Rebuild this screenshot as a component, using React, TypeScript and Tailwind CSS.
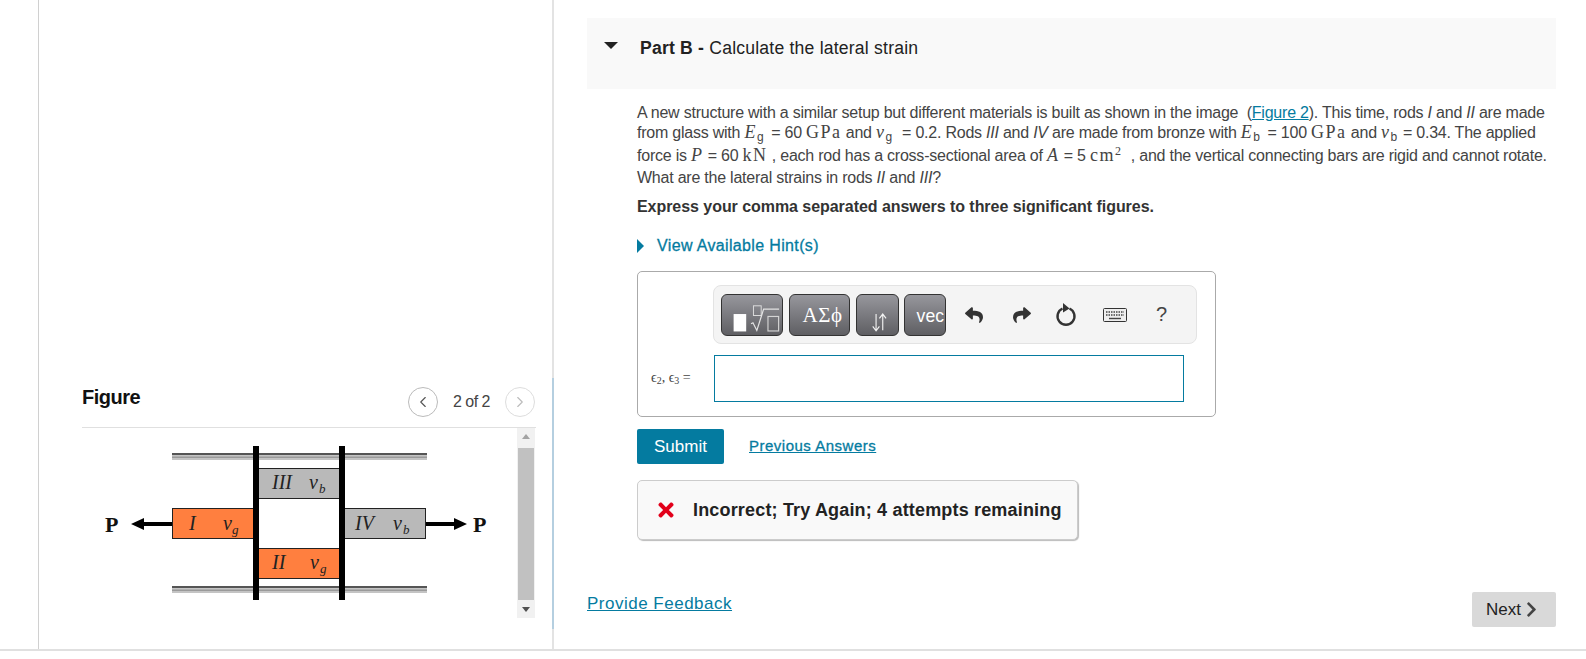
import { ChevronLeft, ChevronRight } from 'lucide-react';
import { FaReply, FaShare, FaTimes, FaChevronRight } from 'react-icons/fa';

const mathFont = "font-['Liberation_Serif',serif]";

function M({ children }: { children: React.ReactNode }) {
    return <span className={`${mathFont} text-[18px] leading-[0] tracking-[1.5px]`}>{children}</span>;
}

function Sub({ children }: { children: React.ReactNode }) {
    return <sub className="text-[12px] leading-[0] font-['Liberation_Sans',sans-serif]">{children}</sub>;
}

function FigureDiagram() {
    return (
        <svg viewBox="82 428 435 190" className="w-[435px] h-[190px] block shrink-0">
            <g fill="#9a9a9a">
                <rect x="172" y="453" width="255" height="7" fill="#c4c4c4" />
                <rect x="172" y="453" width="255" height="2" fill="#555" />
                <rect x="172" y="456.5" width="255" height="1.5" />
                <rect x="172" y="586" width="255" height="7" fill="#c4c4c4" />
                <rect x="172" y="586" width="255" height="2" fill="#555" />
                <rect x="172" y="589.5" width="255" height="1.5" />
            </g>
            <rect x="172.5" y="508.5" width="81" height="30" fill="#ff7f3f" stroke="#222" />
            <rect x="258.5" y="468.5" width="81" height="30" fill="#b9b9b9" stroke="#222" />
            <rect x="344.5" y="508.5" width="81" height="30" fill="#b9b9b9" stroke="#222" />
            <rect x="258.5" y="548.5" width="81" height="30" fill="#ff7f3f" stroke="#222" />
            <rect x="253" y="446" width="6" height="154" fill="#000" />
            <rect x="339" y="446" width="6" height="154" fill="#000" />
            <path d="M172 522h-28v-4l-13 6 13 6v-4h28z" fill="#000" />
            <path d="M426 522h28v-4l13 6-13 6v-4h-28z" fill="#000" />
            <g fontFamily="Liberation Serif, serif" fill="#222">
                <text x="105" y="532" fontSize="22" fontWeight="700" fill="#111">P</text>
                <text x="473" y="532" fontSize="22" fontWeight="700" fill="#111">P</text>
                <g fontSize="20" fontStyle="italic">
                    <text x="189" y="530">I</text>
                    <text x="223" y="530">v</text>
                    <text x="272" y="489">III</text>
                    <text x="309" y="489">v</text>
                    <text x="272" y="569">II</text>
                    <text x="310" y="569">v</text>
                    <text x="355" y="530">IV</text>
                    <text x="393" y="530">v</text>
                </g>
                <g fontSize="13" fontStyle="italic">
                    <text x="232" y="534">g</text>
                    <text x="319" y="493">b</text>
                    <text x="320" y="573">g</text>
                    <text x="403" y="534">b</text>
                </g>
            </g>
        </svg>
    );
}

function Toolbar() {
    const btn = "h-[42px] rounded-[6px] border border-[#333] bg-linear-to-b from-[#97979d] to-[#5f5f63] text-white flex items-center justify-center shrink-0";
    return (
        <div className="w-[484px] h-[59px] border border-[#e3e3e3] rounded-[8px] bg-[#f4f4f4] flex items-center pl-[7px] ml-[75px]">
            <button className={`${btn} w-[62px]`}>
                <svg viewBox="0 0 62 42" className="w-[62px] h-[42px]">
                    <rect x="12" y="20" width="13" height="18" fill="#fff" />
                    <rect x="32.5" y="11.5" width="8" height="10" fill="none" stroke="#ddd" />
                    <path d="M30 30l2-1 4 8 7-22h16" fill="none" stroke="#e4e4e4" strokeWidth="1.2" />
                    <rect x="47.5" y="22.5" width="11" height="15" fill="none" stroke="#d4d4d4" strokeWidth="1.2" />
                </svg>
            </button>
            <button className={`${btn} w-[61px] ml-[6px] ${mathFont} text-[21px] pl-[6px] pt-[2px] tracking-[0.5px]`}>ΑΣϕ</button>
            <button className={`${btn} w-[43px] ml-[6px]`}>
                <svg viewBox="0 0 43 42" className="w-[43px] h-[42px]">
                    <path d="M20 20v17M16.5 33l3.5 4.5 3.5-4.5M27 37V20M23.5 24.5l3.5-4.5 3.5 4.5" fill="none" stroke="#f2f2f2" strokeWidth="1.2" />
                </svg>
            </button>
            <button className={`${btn} w-[42px] ml-[5px] text-[17.6px] pt-[4px] justify-end pr-[1px] font-['Liberation_Sans',sans-serif] tracking-normal`}>vec</button>
            <FaReply className="ml-[19px] w-[18px] h-[18px] text-[#333] shrink-0" />
            <FaShare className="ml-[30px] w-[18px] h-[18px] text-[#333] shrink-0" />
            <svg viewBox="0 0 22 24" className="ml-[24px] w-[22px] h-[24px] -mt-[2px] shrink-0">
                <path d="M7.5 6.5A8.5 8.5 0 1 0 14.5 6.5" fill="none" stroke="#333" strokeWidth="2.4" />
                <path d="M8 1l6.5 5.500-6.500 4z" fill="#333" />
            </svg>
            <svg viewBox="0 0 24 14" className="ml-[26px] w-[24px] h-[14px] shrink-0">
                <rect x="0.5" y="0.5" width="23" height="13" rx="1" fill="#eee" stroke="#333" />
                <path d="M3 4h18M3 7h18" stroke="#444" strokeWidth="1.4" strokeDasharray="1.5 1" />
                <path d="M6 10.5h12" stroke="#444" strokeWidth="1.4" />
            </svg>
            <span className="ml-[29px] text-[20px] text-[#444] tracking-normal -mt-[2px]">?</span>
        </div>
    );
}

export default function App() {
    return (
        <div className="w-[1586px] h-[659px] overflow-hidden bg-white font-['Liberation_Sans',sans-serif] text-[#333]">
            <div className="flex h-[651px] border-b-2 border-[#e0e0e0]">
                <div className="w-[39px] border-r border-[#d0d0d0] shrink-0" />

                <section className="w-[515px] shrink-0 border-r-2 border-[#e3e3e3] relative pl-[43px] pr-[16px] flex flex-col justify-end pb-[31px]">
                    <div className="absolute right-[-2px] top-[378px] h-[251px] w-[2px] bg-[#b5cfe0]" />
                    <div className="flex items-start justify-between h-[50px] border-b border-[#e0e0e0]">
                        <h3 className="text-[20px] font-bold text-[#111] tracking-[-0.5px] leading-[30px] mt-[4px]">Figure</h3>
                        <div className="flex items-center mt-[9px] mr-[1px]">
                            <button className="w-[30px] h-[30px] rounded-full border border-[#bbb] flex items-center justify-center text-[#555]">
                                <ChevronLeft size={18} strokeWidth={1.5} />
                            </button>
                            <span className="mx-[15px] text-[16px] tracking-[-0.5px] text-[#444]">2 of 2</span>
                            <button className="w-[30px] h-[30px] rounded-full border border-[#ddd] flex items-center justify-center text-[#bbb]">
                                <ChevronRight size={18} strokeWidth={1.5} />
                            </button>
                        </div>
                    </div>
                    <div className="flex">
                        <FigureDiagram />
                        <div className="w-[18px] h-[190px] bg-[#f1f1f1] flex flex-col items-center justify-between py-[6px] shrink-0">
                            <div className="w-0 h-0 border-x-[4px] border-x-transparent border-b-[5px] border-b-[#a3a3a3]" />
                            <div className="w-[16px] h-[152px] bg-[#c1c1c1] mt-[1px]" />
                            <div className="w-0 h-0 border-x-[4px] border-x-transparent border-t-[5px] border-t-[#505050]" />
                        </div>
                    </div>
                </section>

                <main className="flex-1 pt-[18px] pl-[33px] pr-[30px] relative">
                    <div className="h-[71px] bg-[#f9f9f9] flex items-center pl-[17px] pb-[10px]">
                        <div className="w-0 h-0 border-x-[7px] border-x-transparent border-t-[7px] border-t-[#222] -mt-[6px]" />
                        <h2 className="ml-[22px] text-[17.6px] text-[#222] tracking-[0.2px]"><b>Part B - </b>Calculate the lateral strain</h2>
                    </div>

                    <div className="pl-[50px] pt-[14px] text-[16px] tracking-[-0.23px] text-[#444]">
                        <div className="leading-[20px] h-[20px] whitespace-nowrap">A new structure with a similar setup but different materials is built as shown in the image &nbsp;(<a className="text-[#047ba0] underline">Figure 2</a>). This time, rods <i>I</i> and <i>II</i> are made</div>
                        <div className="leading-[20px] h-[20px] whitespace-nowrap">from glass with <M><i>E</i><Sub>g</Sub> </M>= 60 <M>GPa</M> and <M><i>ν</i><Sub>g</Sub></M> &nbsp;= 0.2. Rods <i>III</i> and <i>IV</i> are made from bronze with <M><i>E</i><Sub>b</Sub> </M>= 100 <M>GPa</M> and <M><i>ν</i><Sub>b</Sub></M> = 0.34. The applied</div>
                        <div className="leading-[25px] h-[25px] whitespace-nowrap">force is <M><i>P</i></M> = 60 <M>kN</M> , each rod has a cross-sectional area of <M><i>A</i></M> = 5 <M>cm<sup className="text-[12px] leading-[0]">2</sup></M> &nbsp;, and the vertical connecting bars are rigid and cannot rotate.</div>
                        <div className="leading-[19px] h-[19px] whitespace-nowrap">What are the lateral strains in rods <i>II</i> and <i>III</i>?</div>

                        <p className="mt-[10px] font-bold text-[#333] text-[16px] tracking-[-0.05px] leading-[20px]">Express your comma separated answers to three significant figures.</p>

                        <div className="mt-[19px] flex items-center text-[#047ba0] text-[16px] tracking-[0.35px] leading-[20px]">
                            <span className="w-0 h-0 border-y-[7px] border-y-transparent border-l-[7px] border-l-[#047ba0]" />
                            <span className="ml-[13px] [-webkit-text-stroke:0.3px_#047ba0]">View Available Hint(s)</span>
                        </div>

                        <div className="mt-[15px] w-[579px] h-[146px] border border-[#aaa] rounded-[5px] pt-[13px]">
                            <Toolbar />
                            <div className="flex items-center mt-[11px] ml-[13px]">
                                <span className={`w-[63px] ${mathFont} text-[14px] tracking-normal text-[#444] pb-[2px] leading-[20px]`}>ϵ<sub className="text-[10px]">2</sub>, ϵ<sub className="text-[10px]">3</sub> =</span>
                                <div className="w-[470px] h-[47px] border border-[#047ba0] bg-white" />
                            </div>
                        </div>

                        <div className="mt-[12px] flex items-center">
                            <button className="w-[87px] h-[35px] bg-[#047ba0] rounded-[2px] text-white text-[17px] tracking-normal">Submit</button>
                            <a className="ml-[25px] text-[#047ba0] underline text-[15px] tracking-[0.5px] -mt-[1px] [-webkit-text-stroke:0.3px_#047ba0]">Previous Answers</a>
                        </div>

                        <div className="mt-[16px] w-[441px] h-[60px] bg-[#f9f9f9] border border-[#ccc] rounded-[5px] shadow-[1px_1px_1px_#bbb] flex items-center pl-[17px]">
                            <FaTimes className="w-[22px] h-[22px] text-[#e2001a] shrink-0" />
                            <span className="ml-[16px] pt-[1px] font-bold text-[18px] tracking-[0.17px] text-[#222]">Incorrect; Try Again; 4 attempts remaining</span>
                        </div>
                    </div>

                    <div className="absolute left-[33px] right-[30px] bottom-[22px] flex items-center justify-between">
                        <a className="text-[#047ba0] underline text-[17px] tracking-[0.5px] -mt-[12px]">Provide Feedback</a>
                        <button className="w-[84px] h-[35px] bg-[#d9d9d9] rounded-[2px] text-[17px] text-[#222] flex items-center justify-center gap-[3px] pr-[3px]">
                            Next <FaChevronRight className="w-[15px] h-[17px] text-[#444]" />
                        </button>
                    </div>
                </main>
            </div>
        </div>
    );
}
